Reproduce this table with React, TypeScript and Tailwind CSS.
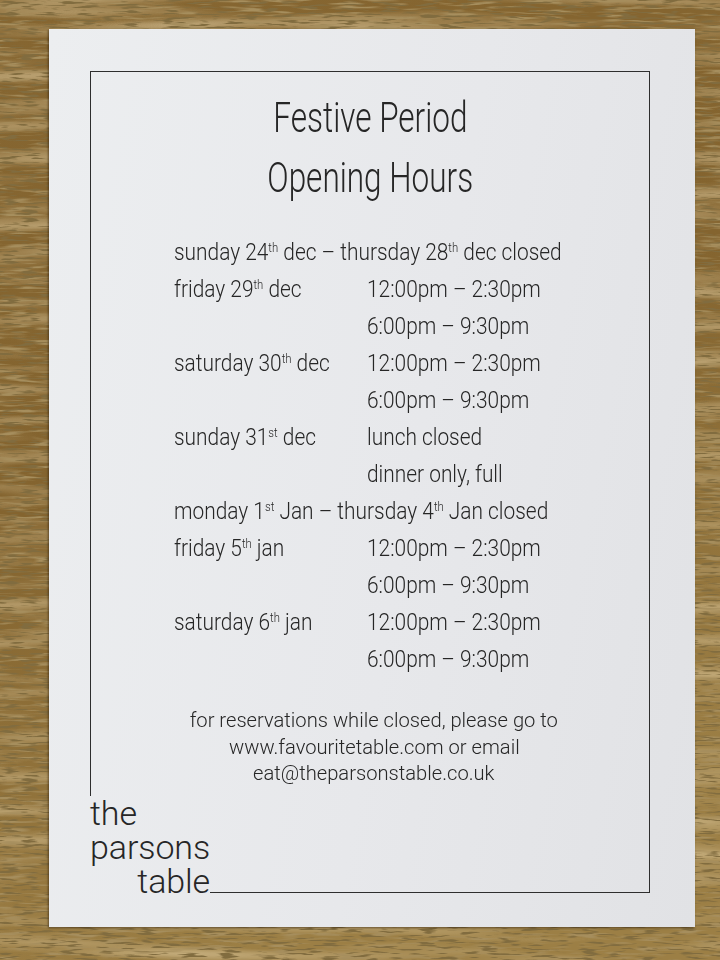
import type { FC, ReactNode } from "react";

type Row = { day?: ReactNode; time: ReactNode; full?: boolean };

const Sup: FC<{ children: ReactNode }> = ({ children }) => (
  <sup className="text-[13px] relative -top-[0.6em] align-baseline">{children}</sup>
);

const rows: Row[] = [
  {
    full: true,
    time: (
      <>
        sunday 24<Sup>th</Sup> dec – thursday 28<Sup>th</Sup> dec closed
      </>
    ),
  },
  { day: <>friday 29<Sup>th</Sup> dec</>, time: "12:00pm – 2:30pm" },
  { time: "6:00pm – 9:30pm" },
  { day: <>saturday 30<Sup>th</Sup> dec</>, time: "12:00pm – 2:30pm" },
  { time: "6:00pm – 9:30pm" },
  { day: <>sunday 31<Sup>st</Sup> dec</>, time: "lunch closed" },
  { time: "dinner only, full" },
  {
    full: true,
    time: (
      <>
        monday 1<Sup>st</Sup> Jan – thursday 4<Sup>th</Sup> Jan closed
      </>
    ),
  },
  { day: <>friday 5<Sup>th</Sup> jan</>, time: "12:00pm – 2:30pm" },
  { time: "6:00pm – 9:30pm" },
  { day: <>saturday 6<Sup>th</Sup> jan</>, time: "12:00pm – 2:30pm" },
  { time: "6:00pm – 9:30pm" },
];

const Squeeze: FC<{ children: ReactNode; className?: string }> = ({ children, className }) => (
  <span className={`inline-block whitespace-nowrap ${className ?? ""}`}>{children}</span>
);

// wood table photo behind the card
const WoodTexture: FC = () => (
  <svg className="absolute inset-0 w-full h-full" viewBox="0 0 720 960" preserveAspectRatio="none">
    <defs>
      <linearGradient id="woodBase" x1="0" y1="0" x2="0.3" y2="1">
        <stop offset="0" stopColor="#866631" />
        <stop offset="0.5" stopColor="#84642f" />
        <stop offset="1" stopColor="#9c7f45" />
      </linearGradient>
      <filter id="grainLight" x="0" y="0" width="100%" height="100%">
        <feTurbulence type="fractalNoise" baseFrequency="0.004 0.06" numOctaves="2" seed="11" />
        <feColorMatrix type="matrix" values="0 0 0 0 0.7  0 0 0 0 0.56  0 0 0 0 0.32  1.6 0 0 0 -0.7" />
      </filter>
      <filter id="grainMid" x="0" y="0" width="100%" height="100%">
        <feTurbulence type="fractalNoise" baseFrequency="0.03 0.3" numOctaves="2" seed="7" />
        <feColorMatrix type="matrix" values="0 0 0 0 0.38  0 0 0 0 0.27  0 0 0 0 0.11  4.5 0 0 0 -2.3" />
      </filter>
      <filter id="grainDark" x="0" y="0" width="100%" height="100%">
        <feTurbulence type="fractalNoise" baseFrequency="0.05 0.45" numOctaves="2" seed="3" />
        <feColorMatrix type="matrix" values="0 0 0 0 0.22  0 0 0 0 0.15  0 0 0 0 0.05  7 0 0 0 -3.8" />
      </filter>
    </defs>
    <rect width="720" height="960" fill="url(#woodBase)" />
    <rect width="720" height="960" filter="url(#grainLight)" />
    <rect width="720" height="960" filter="url(#grainMid)" />
    <rect width="720" height="960" filter="url(#grainDark)" />
  </svg>
);

export default function App() {
  return (
    <div className="relative w-[720px] h-[960px] overflow-hidden bg-[#866631] font-['Roboto','Liberation_Sans',sans-serif] font-light text-[#262626]">
      <WoodTexture />

      <div className="relative pt-[29px] pl-[49px]">
        <div className="w-[646px] h-[898px] pt-[42px] pl-[41px] pr-[45px] pb-[34px] bg-[linear-gradient(100deg,#eceef0_0%,#e7e8eb_55%,#e1e2e5_100%)] shadow-[-1px_1px_2px_rgba(40,25,5,0.55)]">
          <div className="h-full flex flex-col border-t-[1.5px] border-r-[1.5px] border-[#2e2e2e]">
            {/* content column */}
            <div className="flex-1 border-l-[1.5px] border-[#2e2e2e] pt-[16px]">
              <div className="text-[42px] leading-[60px] text-center">
                <div>
                  <Squeeze className="scale-x-[0.75]">Festive Period</Squeeze>
                </div>
                <div>
                  <Squeeze className="scale-x-[0.75]">Opening Hours</Squeeze>
                </div>
              </div>

              <div className="mt-[26px] pl-[83px] grid grid-cols-[193px_1fr] text-[24px] leading-[37px]">
                {rows.map((row, i) =>
                  row.full ? (
                    <div key={i} className="col-span-2">
                      <Squeeze className="origin-left scale-x-[0.87]">{row.time}</Squeeze>
                    </div>
                  ) : (
                    <div key={i} className="contents">
                      <div>
                        {row.day ? <Squeeze className="origin-left scale-x-[0.87]">{row.day}</Squeeze> : null}
                      </div>
                      <div>
                        <Squeeze className="origin-left scale-x-[0.87]">{row.time}</Squeeze>
                      </div>
                    </div>
                  ),
                )}
              </div>

              <div className="mt-[29px] pl-[8px] text-center text-[21px] leading-[26.5px]">
                <div>
                  <Squeeze className="scale-x-[0.96]">for reservations while closed, please go to</Squeeze>
                </div>
                <div>
                  <Squeeze className="scale-x-[0.96]">www.favouritetable.com or email</Squeeze>
                </div>
                <div>
                  <Squeeze className="scale-x-[0.96]">eat@theparsonstable.co.uk</Squeeze>
                </div>
              </div>
            </div>

            {/* logo + bottom rule */}
            <div className="flex items-end">
              <div className="-mb-[5px] flex flex-col items-start text-[34px] leading-[34px] tracking-[-0.1px]">
                <span>the</span>
                <span>parsons</span>
                <span className="self-end">table</span>
              </div>
              <div className="flex-1 border-b-[1.5px] border-[#2e2e2e]" />
            </div>
          </div>
        </div>
      </div>
    </div>
  );
}
